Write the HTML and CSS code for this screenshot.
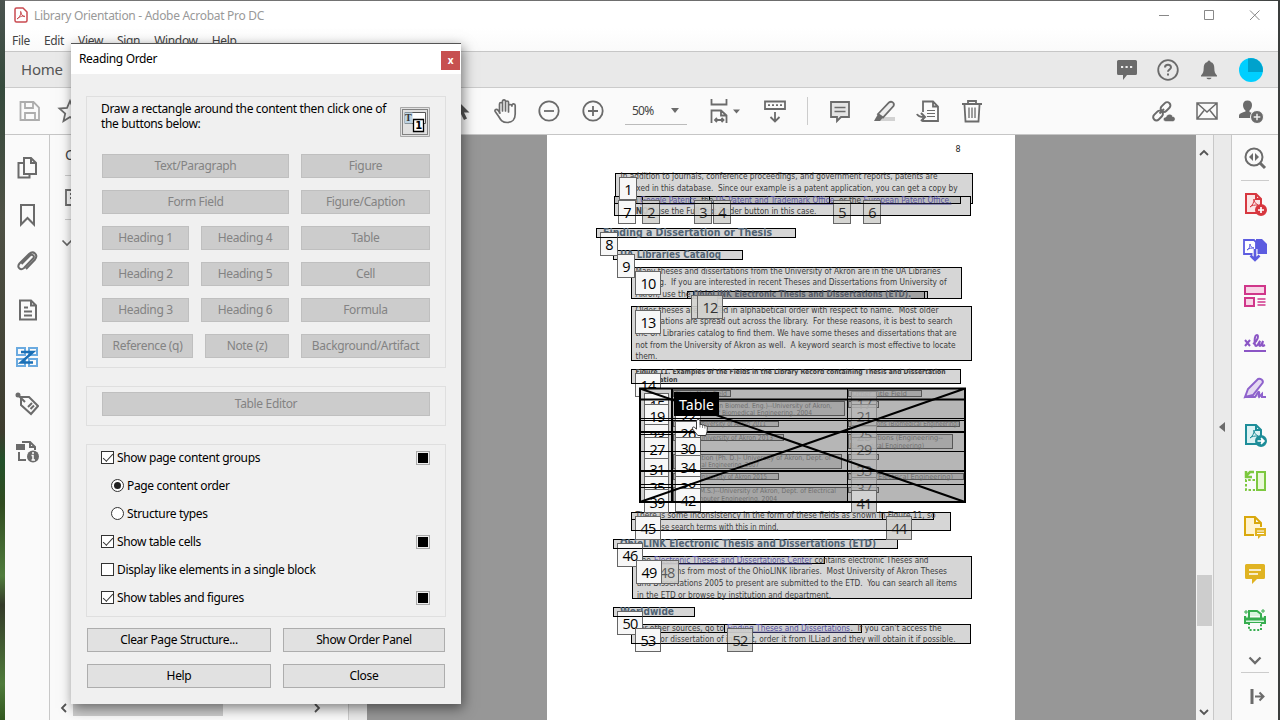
FILE: index.html
```html
<!DOCTYPE html>
<html lang="en">
<head>
<meta charset="utf-8">
<title>Library Orientation - Adobe Acrobat Pro DC</title>
<link rel="stylesheet" href="styles.css">
</head>
<body>
<div class="desktop">
<div class="window">
  <header class="titlebar">
    <svg class="app-icon" width="14" height="16" viewBox="0 0 14 16"><path d="M2.500 1H9l4 4v8.500a1.500 1.500 0 0 1-1.500 1.500h-9A1.500 1.500 0 0 1 1 13.500v-11A1.500 1.500 0 0 1 2.500 1z" fill="#fff" stroke="#c94a50" stroke-width="1.500"/><path d="M3 12c2-1 4-4 4-7 0-1-1-1 0 1 1 3 3 4 4 3.500-1-1-5-.5-8 2.500z" fill="none" stroke="#c94a50"/></svg>
    <span class="title">Library Orientation - Adobe Acrobat Pro DC</span>
    <svg class="winbtns" width="104" height="14" viewBox="1158 8 104 14" fill="none" stroke="#888"><path d="M1159 15.500h10M1204.500 10.500h9v9h-9zM1250 10.500l9.500 9.500M1259.500 10.500l-9.500 9.500"/></svg>
  </header>
  <nav class="menubar"><span>File</span><span>Edit</span><span>View</span><span>Sign</span><span>Window</span><span>Help</span></nav>
  <div class="tabs"><span class="home">Home</span>
    <div class="tab-icons">
      <svg width="22" height="22" viewBox="0 0 22 22"><path d="M2.500 1h17a1.500 1.500 0 0 1 1.500 1.500v12a1.500 1.500 0 0 1-1.500 1.500H11l-4 5v-5H2.500A1.500 1.500 0 0 1 1 14.500v-12A1.500 1.500 0 0 1 2.500 1z" fill="#6b6b6b"/><path d="M5 8h2.200M9.500 8h2.200M14 8h2.200" stroke="#eee" stroke-width="2"/></svg>
      <svg width="22" height="22" viewBox="0 0 22 22" fill="none" stroke="#6b6b6b" stroke-width="1.800"><circle cx="11" cy="11" r="9.800"/><path d="M8 8.500c0-3.500 6-3.500 6-.3 0 2.300-3 2.300-3 4.600M11 14.500v2" stroke-width="2"/></svg>
      <svg width="22" height="22" viewBox="0 0 22 22" fill="#6b6b6b"><path d="M11 1.500c1 0 1.500.8 1.500 1.500 3 .8 3.800 3 3.800 6 0 4 .8 5.500 2.700 7.500v1H3v-1c1.900-2 2.700-3.500 2.700-7.500 0-3 .8-5.200 3.800-6 0-.7.500-1.500 1.500-1.500zM8.500 18.800h5c-.5 2-4.500 2-5 0z"/></svg>
      <svg width="24" height="24" viewBox="0 0 24 24"><circle cx="12" cy="12" r="12" fill="#00cfff"/><path d="M9 0.500A12 12 0 0 1 23.700 14H9z" fill="#00a2cc"/></svg>
    </div>
  </div>
  <div class="toolbar">
    <svg class="ic" viewBox="0 0 44 46" fill="none" stroke="#adadad" stroke-width="1.800"><path d="M13.500 14h12l5.500 5.500V32H12.500V14zM17 14v6h8v-6M17 32v-7h10v7"/></svg>
    <svg class="ic star" viewBox="0 0 44 46" fill="none" stroke="#6b6b6b" stroke-width="1.800"><path d="M23 13l3 7 7.500.6-5.700 5 1.700 7.400-6.500-4-6.500 4 1.700-7.400-5.700-5 7.500-.6z"/></svg>
    <svg class="ic cursor" viewBox="0 0 44 46"><path d="M18 12v18l4-4 3 6 3-1.500-3-6h5.500z" fill="#555"/></svg>
    <svg class="ic" viewBox="0 0 44 46" fill="none" stroke="#6b6b6b" stroke-width="1.700" stroke-linecap="round" stroke-linejoin="round"><path d="M16.500 25v-9c0-2 3-2 3 0v7-9.500c0-2.300 3-2.300 3 0V23v-8.500c0-2 3-2 3 0V24v-6c0-2 3.300-2 3.300 0v0M29 18v-1c0-1.500 3.200-1.500 3.200.5V26c0 5-3 8.500-8 8.500-5 0-6.500-2.500-8.500-6l-3.500-5c-1-1.800 1.500-2.800 2.800-1.200l2 2.700"/></svg>
    <svg class="ic" viewBox="0 0 44 46" fill="none" stroke="#6b6b6b" stroke-width="1.800"><circle cx="22" cy="23" r="9.700"/><path d="M17 23h10"/></svg>
    <svg class="ic" viewBox="0 0 44 46" fill="none" stroke="#6b6b6b" stroke-width="1.800"><circle cx="22" cy="23" r="9.700"/><path d="M17 23h10M22 18v10"/></svg>
    <div class="zoom"><span>50%</span><i class="caret"></i></div>
    <svg class="ic fit" viewBox="0 0 56 46" fill="none" stroke="#6b6b6b" stroke-width="1.800"><path d="M14.500 11v5.500h15V11M14.500 35V22.500h9.500l5.500 5V35M24 22.500v5h5.500M18 32h8.500M20 30l-2 2 2 2M24.500 30l2 2-2 2"/><path d="M36 21.500h7l-3.500 4z" fill="#6b6b6b" stroke="none"/></svg>
    <svg class="ic" viewBox="0 0 44 46" fill="none" stroke="#6b6b6b" stroke-width="1.800"><path d="M12 13.500h20v7.500H12zM22 24v9.500M17.500 29l4.500 4.500 4.500-4.500"/><path d="M15 17.200h14" stroke-dasharray="2 2"/></svg>
    <i class="sep"></i>
    <svg class="ic" viewBox="0 0 44 46" fill="#e4e4e4" stroke="#6b6b6b" stroke-width="1.800"><path d="M13 14h18v15h-8l-4 4v-4h-6z"/><path d="M16.500 19.500h11M16.500 23.500h11" stroke-width="1.300"/></svg>
    <svg class="ic" viewBox="0 0 44 46"><path d="M17 29h16v4H13z" fill="#d2d2d2"/><path d="M16 26L27 14.500c2.500-2 6 .5 4.500 3.500L21 29.500z" fill="#eee" stroke="#6b6b6b" stroke-width="1.800"/><path d="M16 26l5 3.500-3 3.500h-6z" fill="#6b6b6b"/></svg>
    <svg class="ic" viewBox="0 0 44 46" fill="none" stroke="#6b6b6b" stroke-width="1.800"><path d="M17 24V13.500h10l5 5V33H17v-2.500M27 13.500v5h5"/><path d="M21 22.500h8M21 25.500h8M21 28.500h8" stroke-width="1.200"/><path d="M11 26c1 2.500 3 3 7 3M15 25l4 4-4 4" stroke-width="2"/></svg>
    <svg class="ic" viewBox="0 0 44 46" fill="none" stroke="#6b6b6b" stroke-width="1.800"><path d="M12 16h20M18 15.500V13h8v2.500M14.500 17l1 16.500h13l1-16.500"/><path d="M19 19.500v10.500M22 19.500v10.500M25 19.500v10.500" stroke-width="1.300"/></svg>
    <div class="share">
      <svg class="ic" viewBox="0 0 44 46" fill="none" stroke="#6b6b6b" stroke-width="2"><rect x="-5.500" y="-3.200" width="11" height="6.500" rx="3.200" transform="translate(17 27.500) rotate(-45)"/><rect x="-5.500" y="-3.200" width="11" height="6.500" rx="3.200" transform="translate(24.500 19) rotate(-45)"/><path d="M18.500 25.500l4.500-4.500"/><path d="M25 33.500c-3.500 0-3.500-4.500 0-4.500 1-4 6.500-3.500 6.500-.5 3.500 0 3.500 5 0 5z" fill="#6b6b6b" stroke="#fafafa" stroke-width=".5"/></svg>
      <svg class="ic" viewBox="0 0 44 46" fill="none" stroke="#6b6b6b" stroke-width="1.800"><path d="M12 15h20v16H12zM12.500 15.500L22 24l9.500-8.500M12.500 30.500l6.500-8M31.500 30.500l-6.500-8" stroke-width="1.500"/></svg>
      <svg class="ic" viewBox="0 0 44 46"><path d="M18.500 12.500c3 0 4.500 2 4.500 4.500 0 2.500-1 4.500-2.500 5.500v1.500l5 2V30H10v-2c0-2.500 2-3 6.500-4.500V22.500c-1.500-1-2.500-3-2.500-5.500s1.500-4.500 4.500-4.500z" fill="#6b6b6b"/><circle cx="28" cy="29" r="6.500" fill="#6b6b6b" stroke="#fafafa"/><path d="M24.700 29h6.600M28 25.700v6.600" stroke="#eee" stroke-width="1.500"/></svg>
    </div>
  </div>
  <main class="body">
    <aside class="navrail">
      <svg viewBox="0 0 24 24"><path d="M9 4.500V2h7l5 5v11H9V4.500M16 2v5h5M9 7H3.500v14.500h11V18"/></svg>
      <svg viewBox="0 0 24 24"><path d="M6 2h13v19.500l-6.500-6.500L6 21.500z"/></svg>
      <svg viewBox="0 0 24 24"><path d="M7 13.500l8.500-8.500c2-2 5 .5 3.300 2.700L9.500 17.500c-3.500 3-7.500-.8-4.500-4.500L14.500 3.500c4.500-4 9.500 1 6 5.500l-9 9.500" transform="translate(-.5 .5)"/></svg>
      <svg viewBox="0 0 24 24"><path d="M5 2.500h11l5 5v14H5zM16 2.500v5h5M9 9.500h4M9 13.500h8M9 17.500h8"/></svg>
      <svg class="active" viewBox="0 0 24 24"><path d="M2 3h8v7H2zM14 3h8v7h-8zM2 14h8v7H2zM14 14h8v7h-8z" stroke="#6aaae0"/><path d="M6 7h12L6 17.500h12" stroke="#1a6fb5" stroke-width="2.500"/></svg>
      <svg viewBox="0 0 24 24"><path d="M6 5h8l9 9-7 8-10-9zM2 2l8 8M13 15l4-4M15.500 17l3.500-3.500"/><circle cx="3" cy="3" r="1.500"/></svg>
      <svg viewBox="0 0 24 24"><path d="M7 3h8l5 5v3M15 3v5h5M4 13v8h7"/><path d="M1 5h9v6H1z" fill="#6b6b6b" stroke="none"/><circle cx="18" cy="17.500" r="6" fill="#6b6b6b" stroke="none"/><path d="M18 13v2M16.500 16.500H18V21M16.500 21h3.500" stroke="#fff" stroke-width="1.500"/></svg>
    </aside>
    <section class="panel">
      <div class="panel-head"><span>Order</span></div>
      <div class="panel-tools"><svg width="18" height="18" viewBox="0 0 18 18" fill="none" stroke="#6b6b6b" stroke-width="1.800"><path d="M1 1h15v15H1zM5 5h7M5 9h7"/></svg></div>
      <div class="panel-tree"><svg width="12" height="8" viewBox="0 0 12 8" fill="none" stroke="#666" stroke-width="1.700"><path d="M1.500 1.500L6 6l4.500-4.500"/></svg></div>
      <div class="hscroll"><svg width="10" height="10" viewBox="0 0 10 10"><path d="M7 1L3 5l4 4"/></svg><i></i><svg width="10" height="10" viewBox="0 0 10 10"><path d="M3 1l4 4-4 4"/></svg></div>
    </section>
    <div class="gutter"></div>
    <section class="docview">
      <svg class="page" width="468" height="585" viewBox="547 135 468 585">
        <text class="num" x="955.500" y="152">8</text>
        <!-- content groups -->
        <g class="box">
          <rect x="615.500" y="173.500" width="357" height="30"/><rect x="614.500" y="196.500" width="356" height="19"/>
          <rect x="596.500" y="228.500" width="199" height="9"/><rect x="613.500" y="250.500" width="129" height="9"/>
          <rect x="631.500" y="267.500" width="330" height="31"/><rect x="631.500" y="306.500" width="340" height="54"/>
          <rect x="631.500" y="369.500" width="329" height="14"/>
          <rect x="631.500" y="512.500" width="319" height="18"/><rect x="613.500" y="539.500" width="284" height="9"/>
          <rect x="632.500" y="556.500" width="339" height="42"/><rect x="613.500" y="607.500" width="81" height="9"/>
          <rect x="631.500" y="624.500" width="339" height="19"/>
        </g>
        <g class="inner">
          <rect x="614.500" y="196.500" width="28" height="7"/><rect x="642.500" y="196.500" width="48" height="7"/><rect x="690.500" y="196.500" width="19" height="7"/><rect x="709.500" y="196.500" width="120" height="7"/><rect x="829.500" y="196.500" width="131" height="7"/>
          <rect x="687.500" y="291.500" width="240" height="7"/><rect x="693.500" y="291.500" width="231" height="7"/>
          <rect class="clear" x="631.500" y="512.500" width="251" height="7"/><rect class="clear" x="882.500" y="512.500" width="51" height="7"/>
          <rect class="clear" x="632.500" y="556.500" width="192" height="7"/><rect class="clear" x="631.500" y="624.500" width="93" height="8"/><rect class="clear" x="724.500" y="624.500" width="137" height="8"/>
        </g>
        <g class="copy">
          <text x="620.500" y="179.300" textLength="317" lengthAdjust="spacingAndGlyphs">In addition to journals, conference proceedings, and government reports, patents are</text>
          <text x="620.500" y="191" textLength="337" lengthAdjust="spacingAndGlyphs">indexed in this database.&#160; Since our example is a patent application, you can get a copy by</text>
          <text x="620.500" y="202.700" textLength="331" lengthAdjust="spacingAndGlyphs">from <tspan class="link">Google Patents</tspan>, the <tspan class="link">US Patent and Trademark Office</tspan>, or the <tspan class="link">European Patent Office.</tspan></text>
          <text x="620.500" y="214.300" textLength="196" lengthAdjust="spacingAndGlyphs"><tspan class="b">DO NOT</tspan> use the Full Text Finder button in this case.</text>
          <text class="h" x="603" y="236.300" textLength="169" lengthAdjust="spacingAndGlyphs">Finding a Dissertation or Thesis</text>
          <text class="h" x="620" y="258.300" textLength="101" lengthAdjust="spacingAndGlyphs">UA Libraries Catalog</text>
          <text x="635.500" y="274" textLength="305" lengthAdjust="spacingAndGlyphs">Many theses and dissertations from the University of Akron are in the UA Libraries</text>
          <text x="635.500" y="285.300" textLength="311" lengthAdjust="spacingAndGlyphs">Catalog.&#160; If you are interested in recent Theses and Dissertations from University of</text>
          <text x="635.500" y="297" textLength="55" lengthAdjust="spacingAndGlyphs">Akron, use the</text>
          <text class="b u" x="693" y="297" textLength="218" lengthAdjust="spacingAndGlyphs">OhioLINK Electronic Thesis and Dissertations (ETD).</text>
          <text x="635.500" y="313" textLength="303" lengthAdjust="spacingAndGlyphs">Older theses are located in alphabetical order with respect to name.&#160; Most older</text>
          <text x="635.500" y="324.300" textLength="317" lengthAdjust="spacingAndGlyphs">dissertations are spread out across the library.&#160; For these reasons, it is best to search</text>
          <text x="635.500" y="336" textLength="321" lengthAdjust="spacingAndGlyphs">the UA Libraries catalog to find them. We have some theses and dissertations that are</text>
          <text x="635.500" y="347.700" textLength="320" lengthAdjust="spacingAndGlyphs">not from the University of Akron as well.&#160; A keyword search is most effective to locate</text>
          <text x="635.500" y="359" textLength="22" lengthAdjust="spacingAndGlyphs">them.</text>
          <text class="fig" x="635.500" y="374.300" textLength="310" lengthAdjust="spacingAndGlyphs">Figure 11. Examples of the Fields in the Library Record containing Thesis and Dissertation</text>
          <text class="fig" x="635.500" y="382" textLength="42" lengthAdjust="spacingAndGlyphs">Information</text>
          <text x="635.500" y="518.300" textLength="300" lengthAdjust="spacingAndGlyphs">There is some inconsistency in the form of these fields as shown in Figure 11, so</text>
          <text x="635.500" y="530" textLength="143" lengthAdjust="spacingAndGlyphs">use these search terms with this in mind.</text>
          <text class="h" x="620" y="547.300" textLength="256" lengthAdjust="spacingAndGlyphs">OhioLINK Electronic Thesis and Dissertations (ETD)</text>
          <text x="637" y="562.700" textLength="14" lengthAdjust="spacingAndGlyphs">The</text>
          <text class="link" x="654" y="562.700" textLength="158" lengthAdjust="spacingAndGlyphs">Electronic Theses and Dissertations Center</text>
          <text x="814.500" y="562.700" textLength="114" lengthAdjust="spacingAndGlyphs">contains electronic Theses and</text>
          <text x="637" y="574.200" textLength="310" lengthAdjust="spacingAndGlyphs">dissertations from most of the OhioLINK libraries.&#160; Most University of Akron Theses</text>
          <text x="637" y="585.800" textLength="320" lengthAdjust="spacingAndGlyphs">and Dissertations 2005 to present are submitted to the ETD.&#160; You can search all items</text>
          <text x="637" y="597.600" textLength="194" lengthAdjust="spacingAndGlyphs">in the ETD or browse by institution and department.</text>
          <text class="h" x="620" y="615.300" textLength="54" lengthAdjust="spacingAndGlyphs">Worldwide</text>
          <text x="636" y="630.700" textLength="88" lengthAdjust="spacingAndGlyphs">For other sources, go to</text>
          <text class="link" x="727" y="630.700" textLength="123" lengthAdjust="spacingAndGlyphs">Finding Theses and Dissertations</text>
          <text x="850.500" y="630.700" textLength="91" lengthAdjust="spacingAndGlyphs">.&#160; If you can't access the</text>
          <text x="636" y="642" textLength="319.500" lengthAdjust="spacingAndGlyphs">thesis or dissertation of interest, order it from ILLiad and they will obtain it if possible.</text>
        </g>
        <!-- number tags on the text groups -->
        <g class="tag">
          <rect x="619.500" y="177.500" width="17" height="22"/><text x="628" y="194.500">1</text>
          <rect x="618.500" y="200.500" width="17" height="23"/><text x="627" y="217.500">7</text>
          <rect x="617.500" y="254.500" width="17" height="23"/><text x="626" y="271.500">9</text>
          <rect x="600.500" y="232.500" width="17" height="23"/><text x="609" y="249.500">8</text>
          <rect x="635.500" y="271.500" width="25" height="23"/><text x="648" y="289">10</text>
          <rect x="635.500" y="310.500" width="25" height="23"/><text x="648" y="328">13</text>
          <rect x="635.500" y="373.500" width="25" height="23"/><text x="648" y="391">14</text>
          <rect x="635.500" y="516.500" width="25" height="23"/><text x="648" y="534">45</text>
          <rect x="617.500" y="543.500" width="25" height="23"/><text x="630" y="560.500">46</text>
          <rect x="617.500" y="611.500" width="25" height="23"/><text x="630" y="628.500">50</text>
          <rect x="635.500" y="628.500" width="25" height="23"/><text x="648" y="646">53</text>
        </g>
        <g class="tag dim">
          <rect x="642.500" y="200.500" width="17" height="23"/><text x="651" y="217.500">2</text>
          <rect x="694.500" y="200.500" width="17" height="23"/><text x="703" y="217.500">3</text>
          <rect x="713.500" y="200.500" width="17" height="23"/><text x="722" y="217.500">4</text>
          <rect x="833.500" y="200.500" width="17" height="23"/><text x="842" y="217.500">5</text>
          <rect x="863.500" y="200.500" width="17" height="23"/><text x="872" y="217.500">6</text>
          <rect x="691.500" y="295.500" width="26" height="23"/><rect x="697.500" y="295.500" width="25" height="23"/><text x="710" y="313">12</text>
          <rect x="886.500" y="516.500" width="25" height="23"/><text x="899" y="534">44</text>
          <rect x="653.500" y="560.500" width="25" height="23"/><text x="667" y="578" fill-opacity=".75">48</text>
          <rect x="727.500" y="628.500" width="25" height="23"/><text x="740" y="646">52</text>
        </g>
        <g class="tag"><rect x="636.500" y="560.500" width="25" height="23"/><text x="649" y="578">49</text></g>
        <!-- edges that stay visible across the tags -->
        <path d="M614.500 215.500H881M642 203.500H881M596.500 237.500h21M631.500 530.500h29M882 530.500h30M613.500 548.500h29M613.500 616.500h29M631.500 643.500h29M724 643.500h30M631.500 383.500h29" stroke="#000" fill="none"/>
        <!-- table -->
        <rect x="640" y="388" width="325" height="114" fill="#b6b6b6"/><rect x="641" y="389" width="30" height="112" fill="#cfcfcf"/>
        <g class="cellbox">
          <rect x="673.500" y="390.500" width="57" height="6"/><rect x="674.500" y="401.500" width="170" height="14"/><rect x="673.500" y="421.500" width="105" height="5"/><rect x="673.500" y="434.500" width="110" height="6"/><rect x="673.500" y="454.500" width="168" height="14"/><rect x="673.500" y="473.500" width="105" height="6"/><rect x="673.500" y="487.500" width="174" height="14"/>
          <rect x="848.500" y="390.500" width="73" height="6"/><rect x="848.500" y="401.500" width="30" height="6"/><rect x="848.500" y="421.500" width="111" height="5"/><rect x="848.500" y="434.500" width="104" height="14"/><rect x="848.500" y="454.500" width="30" height="5"/><rect x="848.500" y="473.500" width="115" height="6"/><rect x="848.500" y="487.500" width="30" height="5"/>
        </g>
        <g class="celltext">
          <text x="675" y="396" textLength="52" lengthAdjust="spacingAndGlyphs">Thesis Note Field</text><text x="852" y="396" textLength="55" lengthAdjust="spacingAndGlyphs">Other Title Field</text>
          <text x="676" y="407.500" textLength="156" lengthAdjust="spacingAndGlyphs">Thesis (Ph.D. in Biomed. Eng.)--University of Akron,</text><text x="676" y="414.800" textLength="136" lengthAdjust="spacingAndGlyphs">Department of Biomedical Engineering, 2004</text>
          <text x="676" y="426.300" textLength="90" lengthAdjust="spacingAndGlyphs">Thesis--University of Akron 2011</text><text x="676" y="440" textLength="97" lengthAdjust="spacingAndGlyphs">Thesis--University of Akron 2013</text>
          <text x="676" y="459.500" textLength="155" lengthAdjust="spacingAndGlyphs">Dissertation (Ph. D.)- University of Akron, Dept. of</text><text x="676" y="467" textLength="83" lengthAdjust="spacingAndGlyphs">Biomedical Engineering, 2007</text>
          <text x="676" y="479" textLength="91" lengthAdjust="spacingAndGlyphs">Thesis--University of Akron 2015</text><text x="676" y="492.500" textLength="160" lengthAdjust="spacingAndGlyphs">Thesis (M.S.)--University of Akron, Dept. of Electrical</text><text x="676" y="500.500" textLength="101" lengthAdjust="spacingAndGlyphs">and Computer Engineering, 2004</text>
          <text x="850" y="426.300" textLength="109" lengthAdjust="spacingAndGlyphs">Dissertations (Biomedical Engineering)</text><text x="850" y="440" textLength="93" lengthAdjust="spacingAndGlyphs">Dissertations (Engineering--</text><text x="850" y="447.500" textLength="74" lengthAdjust="spacingAndGlyphs">Biomedical Engineering)</text><text x="850" y="479" textLength="103" lengthAdjust="spacingAndGlyphs">Theses (Electrical Engineering)</text>
        </g>
        <g class="tag">
          <rect x="644.500" y="393.500" width="24" height="23"/><text x="657" y="411">15</text>
          <rect x="644.500" y="404.500" width="24" height="23"/><text x="657" y="421.500">19</text>
          <rect x="644.500" y="424.500" width="24" height="23"/><text x="657" y="441.500">23</text>
          <rect x="644.500" y="437.500" width="24" height="23"/><text x="657" y="454.500">27</text>
          <rect x="644.500" y="458.500" width="24" height="23"/><text x="657" y="475">31</text>
          <rect x="644.500" y="476.500" width="24" height="23"/><text x="657" y="493">35</text>
          <rect x="644.500" y="489.500" width="24" height="23"/><text x="657" y="508">39</text>
          <rect x="675.500" y="404.500" width="25" height="23"/><text x="688" y="421.500">22</text>
          <rect x="675.500" y="421.500" width="25" height="23"/><text x="688" y="439">26</text>
          <rect x="675.500" y="437.500" width="25" height="23"/><text x="688" y="454">30</text>
          <rect x="675.500" y="455.500" width="25" height="23"/><text x="688" y="472.500">34</text>
          <rect x="675.500" y="476.500" width="25" height="23"/><text x="688" y="492.500">38</text>
          <rect x="675.500" y="488.500" width="25" height="23"/><text x="688" y="505.500">42</text>
        </g>
        <g class="tag faint">
          <rect x="851.500" y="391.500" width="25" height="13"/><text x="864" y="409">17</text><rect x="851.500" y="404.500" width="25" height="21"/><text x="864" y="421.500">21</text>
          <rect x="851.500" y="425.500" width="25" height="12"/><text x="864" y="441">25</text><rect x="851.500" y="437.500" width="25" height="22"/><text x="864" y="455">29</text>
          <rect x="851.500" y="459.500" width="25" height="18"/><text x="864" y="476">33</text><rect x="851.500" y="477.500" width="25" height="13"/><text x="864" y="494">37</text>
        </g>
        <g class="tag pale"><rect x="851.500" y="490.500" width="25" height="22"/><text x="864" y="508.500">41</text></g>
        <path class="grid" d="M640 399.500H965M640 432H965M640 471H965M672 388V502"/>
        <path class="grid thin" d="M640 418.500H965M640 420.500H965M640 434.500H672M640 451.500H965M640 484.500H965M640 487.500H672M847.500 388V502"/>
        <path d="M640 388.500H965V502H640zL965 502M965 388.500L640 502" class="grid"/>
        <rect x="674" y="392" width="45" height="24" fill="#000"/><text class="tip" x="679" y="410" textLength="35" lengthAdjust="spacingAndGlyphs">Table</text>
        <!-- hand pointer -->
        <path d="M698.200 419.500c1.200 0 1.800.8 1.800 1.800v3.500c.6-.6 2-.5 2.400.4.700-.5 2-.3 2.300.7 1-.4 2.600 0 2.600 1.800 0 3-.3 5-1.500 7.800h-8c-1.800-2.200-3.500-4.500-5.300-6.500-.8-1.200.7-2.700 2-1.600l2 1.700v-7.800c0-1 .6-1.800 1.700-1.800z" fill="#fff" stroke="#222" stroke-width=".9"/><path d="M700 424.500v3M702.500 425v3M704.900 425.800v2.700" stroke="#555" stroke-width=".7"/>
      </svg>
    </section>
    <div class="vscroll"><svg width="10" height="8" viewBox="0 0 10 8"><path d="M1 6l4-4 4 4"/></svg><i></i><svg width="10" height="8" viewBox="0 0 10 8"><path d="M1 2l4 4 4-4"/></svg></div>
    <div class="collapse"><svg width="6" height="10" viewBox="0 0 6 10"><path d="M6 0v10L0 5z" fill="#6b6b6b"/></svg></div>
    <aside class="tools">
      <svg viewBox="0 0 24 24" fill="none" stroke="#6b6b6b" stroke-width="2"><circle cx="11" cy="11" r="8.500"/><path d="M17 17l5 5" stroke-width="3"/><path d="M10 7v8l-4-4zM12 7v8l4-4z" fill="#6b6b6b" stroke="none"/></svg>
      <hr>
      <svg viewBox="0 0 24 24" fill="#fbe6e6" stroke="#d7373f" stroke-width="2"><path d="M3 2h10l5 5v14H3zM13 2v5h5"/><path d="M7 15c3-2 4-5 4-8 0 3 2 5 4 6-3 0-6 0-8 2z" stroke-width="1"/><circle cx="18" cy="18" r="5" fill="#d7373f"/><path d="M15 18h6M18 15v6" stroke="#fff" stroke-width="1.700"/></svg>
      <svg viewBox="0 0 24 24" fill="none" stroke="#5c5ce0" stroke-width="1.800"><path d="M13 1h6l5 5v10H13z" fill="#5c5ce0" stroke="none"/><path d="M1 2h10l2 2v12H1z" fill="#fff"/><path d="M4 12c2-1 3-3 3-6 0 2 2 4 4 4-2 0-5 0-7 2z" stroke-width="1"/><path d="M12 11v10M8 18l4 4 4-4" stroke="#fafafa" stroke-width="5"/><path d="M12 11v11M7.500 17.500L12 22l4.500-4.500" stroke-width="2.600"/></svg>
      <svg viewBox="0 0 24 24" fill="#f8d5e7" stroke="#d0368a" stroke-width="2"><path d="M2 2h20v8H2zM2 14h9v8H2z"/><path d="M14.500 15h8M14.500 18h8M14.500 21h8" stroke-width="1.300"/></svg>
      <svg viewBox="0 0 24 24" fill="none" stroke="#8b55c5" stroke-width="2"><path d="M2 9l5 6M7 9l-5 6M10 13c5-3 6-9 4-9-3 0-3 11-1 11s3-4 4-5c-1 3-1 5 0 5s2-3 3-5c-1 4-1 5 0 5l2-1M1 20h22"/></svg>
      <svg viewBox="0 0 24 24" fill="#e5d9f2" stroke="#8e62cc" stroke-width="2"><path d="M2 20l3-8L15 2c2-1 6 1 4.500 4L10 18zM2 20h10c2-2 3-6 4-5s-1 4 0 5l3-3v3h4"/></svg>
      <svg viewBox="0 0 24 24" fill="#dcf2f4" stroke="#1d8d99" stroke-width="2"><path d="M3 2h10l5 5v14H3zM13 2v5h5"/><path d="M7 15c3-2 4-5 4-8 0 3 2 5 4 6-3 0-6 0-8 2z" stroke-width="1"/><circle cx="18" cy="18" r="5" fill="#1d8d99"/><path d="M14.500 18h6M18 15l3 3-3 3" stroke="#fff" stroke-width="1.600"/></svg>
      <svg viewBox="0 0 24 24" fill="none" stroke="#7cc83f" stroke-width="2"><path d="M14 3h8v18h-8z" fill="#e9f8d8"/><path d="M12 11H3v10h9" stroke-dasharray="2.500 1.800"/><path d="M11 3H7L3.500 6.500M3 2v6h6" stroke-width="2.500"/></svg>
      <svg viewBox="0 0 24 24" fill="#fff3cf" stroke="#d9a80c" stroke-width="2"><path d="M11 20H2V2h10l6 6v4M12 2v6h6"/><path d="M12 13h11v8h-5l-3 3v-3h-3z" fill="#e0b322" stroke="none"/><path d="M14 16h7M14 18.500h7" stroke="#fff" stroke-width="1"/></svg>
      <svg viewBox="0 0 24 24"><path d="M3.500 2h17A1.500 1.500 0 0 1 22 3.500v12a1.500 1.500 0 0 1-1.500 1.500H14l-5 5v-5H3.500A1.500 1.500 0 0 1 2 15.500v-12A1.500 1.500 0 0 1 3.500 2z" fill="#e0b322"/><path d="M6 8h12M6 12h9" stroke="#fff" stroke-width="1.500"/></svg>
      <svg viewBox="0 0 24 24" fill="none" stroke="#36ad4f" stroke-width="2"><path d="M6 10V3h8l4 3v4M2 8v7h20V8" fill="#d8f5df"/><path d="M1 11h22" stroke-width="3"/><path d="M6 15v7h12v-7" fill="#fafafa" stroke-dasharray="2 1.800"/><path d="M3 2v4M1 4h4M20 1v4M18 3h4" stroke-width="1"/></svg>
      <svg class="chev" viewBox="0 0 24 24" fill="none" stroke="#6b6b6b" stroke-width="2.300"><path d="M6.500 9.500L12 15l5.500-5.500"/></svg>
      <hr>
      <svg viewBox="0 0 24 24" fill="none" stroke="#6b6b6b" stroke-width="2"><path d="M9 5v15" stroke-width="3"/><path d="M12 12.500h8M16.500 8.500l4 4-4 4"/></svg>
    </aside>
  </main>
</div>

<div class="dialog" role="dialog" aria-label="Reading Order">
  <div class="dlg-title"><span>Reading Order</span><button class="x">x</button></div>
  <div class="dlg-body">
    <div class="group g1">
      <div class="intro"><p>Draw a rectangle around the content then click one of<br>the buttons below:</p>
        <svg width="30" height="30" viewBox="0 0 30 30"><path d="M.5.5h29v29H.5z" fill="#e1e1e1" stroke="#a8a8a8"/><path d="M2.500 2.500h25v25h-25z" fill="none" stroke="#222" stroke-dasharray="1 1"/><path d="M5 5.500h20.500v11H5z" fill="#fff" stroke="#555"/><path d="M4.500 5.500h8v11h-8z" fill="#bdd3e2"/><text x="5" y="14" class="tglyph">T</text><path d="M13.500 12.500h10v12h-10z" fill="#fff" stroke="#000" stroke-width="1.300"/><text x="15.300" y="22.300" class="oneglyph">1</text></svg></div>
      <div class="row"><button class="w187">Text/Paragraph</button><button>Figure</button></div>
      <div class="row"><button class="w187">Form Field</button><button>Figure/Caption</button></div>
      <div class="row"><button class="w87">Heading 1</button><button class="w88">Heading 4</button><button>Table</button></div>
      <div class="row"><button class="w87">Heading 2</button><button class="w88">Heading 5</button><button>Cell</button></div>
      <div class="row"><button class="w87">Heading 3</button><button class="w88">Heading 6</button><button>Formula</button></div>
      <div class="row"><button class="w91">Reference (q)</button><button class="w84">Note (z)</button><button>Background/Artifact</button></div>
    </div>
    <div class="group g2"><div class="row"><button>Table Editor</button></div></div>
    <div class="group g3">
      <div class="opt"><i class="check on"></i><span>Show page content groups</span><i class="swatch"></i></div>
      <div class="opt sub"><i class="radio on"></i><span>Page content order</span></div>
      <div class="opt sub"><i class="radio"></i><span>Structure types</span></div>
      <div class="opt"><i class="check on"></i><span>Show table cells</span><i class="swatch"></i></div>
      <div class="opt"><i class="check"></i><span>Display like elements in a single block</span></div>
      <div class="opt"><i class="check on"></i><span>Show tables and figures</span><i class="swatch"></i></div>
    </div>
    <div class="actions"><button>Clear Page Structure...</button><button>Show Order Panel</button><button>Help</button><button>Close</button></div>
  </div>
</div>
</div>
</body>
</html>
```
FILE: styles.css
```css
* { box-sizing: border-box; }
body { margin: 0; width: 1280px; height: 720px; overflow: hidden; font-family: "Noto Sans", "Open Sans", sans-serif; font-size: 12px; color: #444; }
button { font: inherit; letter-spacing: inherit; padding: 0 0 1px; white-space: nowrap; }
.desktop { position: relative; width: 1280px; height: 720px; padding: 1px 2px 0 5px; background: linear-gradient(90deg, transparent 5px, #777 5px, #666 1200px, #3a3d3c), linear-gradient(#4c5450, #354a3c 12%, #4e5145 30%, #3d3c2e 60%, #23512a 64%, #304b20 70%, #507c3d 80%, #343a29 84%, #4f7b3b 95%, #31571f); }
.window { height: 719px; display: flex; flex-direction: column; background: #fafafa; }
svg { display: block; flex: none; }

.titlebar { height: 27px; display: flex; align-items: center; padding: 1px 16px 0 9px; background: #fff; }
.title { margin-left: 6px; font-size: 12px; letter-spacing: -.3px; color: #999; }
.winbtns { margin-left: auto; }
.menubar { height: 24px; display: flex; gap: 14px; padding: 4px 0 0 7px; border-bottom: 1px solid #c6c6c6; background: linear-gradient(#fff, #fafafa); line-height: 17px; letter-spacing: -.33px; color: #444; }
.tabs { height: 36px; display: flex; align-items: center; background: #e9e9e9; border-bottom: 1px solid #cbcbcb; }
.home { padding: 0 0 2px 16px; font-size: 15px; letter-spacing: -.2px; color: #555; }
.tab-icons { margin-left: auto; display: flex; gap: 19px; align-items: center; padding-right: 15px; }
.toolbar { height: 47px; display: flex; align-items: flex-start; padding-left: 3px; border-bottom: 1px solid #c6c6c6; background: #fafafa; }
.ic { width: 44px; height: 46px; }
.star { margin-left: -5px; }
.cursor { margin-left: 348px; }
.fit { width: 56px; }
.zoom { width: 62px; height: 37px; margin: 0 10px; padding: 9px 8px 0 7px; border-bottom: 1px solid #bbb; display: flex; align-items: center; justify-content: space-between; letter-spacing: -.8px; }
.caret { border: 4px solid transparent; border-top: 5px solid #6b6b6b; border-bottom: 0; }
.sep { width: 1px; height: 28px; margin: 9px 10px 0; background: #ccc; }
.share { margin-left: auto; display: flex; padding-right: 5px; }

.body { flex: 1; display: flex; min-height: 0; }
.navrail { width: 45px; border-right: 1px solid #c8c8c8; display: flex; flex-direction: column; align-items: center; gap: 23.200px; padding: 21px 1px 0 0; }
.navrail svg { width: 24px; height: 24px; fill: none; stroke: #6b6b6b; stroke-width: 2; }
.panel { width: 299px; background: #fafafa; border-right: 1px solid #ccc; display: flex; flex-direction: column; padding: 0 0 4px 15px; }
.panel-head { height: 41px; border-bottom: 1px solid #ccc; padding-top: 10px; font-size: 14px; }
.panel-tools { height: 44px; border-bottom: 1px solid #ccc; padding-top: 13px; }
.panel-tree { flex: 1; }
.panel-tree svg { margin-top: 19px; margin-left: -4px; }
.hscroll { display: flex; align-items: center; height: 16px; margin-left: -7px; padding: 0 26px 0 1px; }
.hscroll i { width: 150px; height: 15px; background: #cdcdcd; margin: 0 auto 0 4px; }
.hscroll path, .vscroll path { fill: none; stroke: #555; stroke-width: 1.800; }
.gutter { width: 18px; background: #eaeaea; }
.docview { flex: 1; background: #979797; display: flex; justify-content: flex-start; padding-left: 180px; }
.page { background: #fff; }
.vscroll { width: 18px; background: #f2f2f2; border-right: 1px solid #c8c8c8; display: flex; flex-direction: column; align-items: center; padding: 14px 1px 4px 0; }
.vscroll i { width: 15px; height: 51px; background: #cdcdcd; margin: 418px 0 auto; }
.collapse { width: 18px; background: #eaeaea; border-right: 1px solid #c8c8c8; display: flex; align-items: center; padding: 0 0 1px 5px; }
.tools { width: 46px; background: #fafafa; display: flex; flex-direction: column; align-items: center; gap: 22.200px; padding-top: 11px; }
.tools svg { width: 24px; height: 24px; }
.tools hr { width: 28px; height: 1px; border: 0; margin: -12.200px 0 -11.200px; background: #ccc; }
.tools .chev { margin: -6px 0 0; }
.tools .chev + hr { margin: -22px 0 -11px; }

.dialog { position: absolute; left: 71px; top: 43px; width: 390px; height: 661px; background: #f0f0f0; border-top: 1px solid #555; box-shadow: 2px 4px 12px rgba(0, 0, 0, .5); color: #000; letter-spacing: -.34px; }
.dlg-title { height: 30px; background: #fff; display: flex; align-items: center; justify-content: space-between; padding: 0 1px 0 8px; }
.dlg-title span { padding-bottom: 2px; }
.x { width: 19px; height: 19px; margin-top: 3px; background: #c75050; color: #fff; border: 0; font-weight: bold; font-size: 10px; line-height: 17px; }
.dlg-body { padding: 22px 15px 0; }
.group { border: 1px solid #dfdfdf; padding: 0 15px; display: flex; flex-direction: column; }
.g1 { height: 272px; gap: 12px; }
.intro { height: 45px; display: flex; justify-content: space-between; padding-top: 4px; }
.intro p { margin: 0 0 0 -1px; line-height: 15px; white-space: nowrap; }
.intro svg { margin-top: 6px; }
.tglyph { font: bold 10px "Liberation Serif", serif; fill: #333; }
.oneglyph { font: bold 10px "DejaVu Sans", sans-serif; fill: #000; }
.row { display: flex; gap: 12px; height: 24px; }
.row button { flex: 1; background: #ccc; border: 1px solid #bfbfbf; color: #838383; }
.row .w187 { flex: 0 0 187px; }
.row .w87 { flex: 0 0 87px; }
.row .w88 { flex: 0 0 88px; }
.row .w91 { flex: 0 0 91px; }
.row .w84 { flex: 0 0 84px; }
.g2 { height: 40px; margin-top: 18px; padding-top: 5px; }
.g3 { height: 173px; margin-top: 18px; }
.opt { height: 28px; display: flex; align-items: center; gap: 3px; margin-left: -1px; padding-bottom: 3px; }
.opt span { padding-bottom: 1px; }
.opt.sub { padding-left: 10px; }
.check, .radio { width: 13px; height: 13px; border: 1px solid #333; background: #fff; display: flex; }
.radio { border-radius: 50%; }
.check.on::after { content: ""; width: 9px; height: 4px; border: solid #333; border-width: 0 0 1.500px 1.500px; transform: translate(1px, 2px) rotate(-47deg); }
.radio.on::after { content: ""; width: 7px; height: 7px; margin: 2px; border-radius: 50%; background: #222; }
.swatch { width: 14px; height: 14px; margin-left: auto; background: #000; border: 1px solid #aaa; box-shadow: inset 0 0 0 1px #eee; }
.actions { display: grid; grid-template-columns: 184px 162px; gap: 12px; margin: 11px 0 0 1px; }
.actions button { height: 24px; background: #e1e1e1; border: 1px solid #adadad; color: #000; }

.num { font: 8px "DejaVu Sans", sans-serif; fill: #222; }
.copy { font: 8.300px "DejaVu Sans Condensed", "DejaVu Sans", sans-serif; fill: #3c3c3c; }
.copy .link { fill: #5652a4; text-decoration: underline; }
.copy .b { font-weight: bold; }
.copy .u { fill: #555b68; text-decoration: underline; }
.copy .h { font: bold 10px "DejaVu Sans", sans-serif; fill: #4f6273; }
.copy .fig { font-weight: bold; font-size: 7px; }
.box rect { fill: #d6d6d6; stroke: #000; }
.inner rect { fill: rgba(0, 0, 0, .13); stroke: #000; }
.inner .clear { fill: rgba(0, 0, 0, .03); }
.tag { font: 14.500px "Open Sans", "Noto Sans", sans-serif; text-anchor: middle; letter-spacing: -.8px; fill: #000; }
.tag rect { fill: #f7f7f7; stroke: #666; }
.dim rect { fill: rgba(208, 208, 205, .9); }
.dim text { fill: #333; }
.faint rect { fill: rgba(185, 185, 185, .8); stroke: #888; }
.faint text { fill: #666; }
.pale rect { fill: #d2d2d2; }
.pale text { fill: #333; }
.cellbox rect { fill: #a6a6a6; stroke: #555; }
.celltext { font: 6.800px "DejaVu Sans Condensed", sans-serif; fill: #707070; }
.grid { fill: none; stroke: #000; stroke-width: 2; }
.thin { stroke-width: 1; }
.tip { font: 15px "Noto Sans", sans-serif; fill: #fff; }
```
